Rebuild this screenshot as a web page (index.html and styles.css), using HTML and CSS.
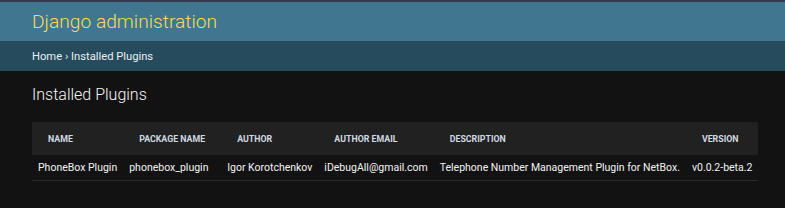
FILE: index.html
```html
<!DOCTYPE html>
<html>
<head>
<meta charset="utf-8">
<link rel="stylesheet" href="styles.css">
</head>
<body>
<div class="topline"></div>
<header class="header">
  <div class="brand">Django administration</div>
</header>
<nav class="breadcrumbs">Home &rsaquo; Installed Plugins</nav>
<main class="content">
  <h1 class="title">Installed Plugins</h1>
  <table class="plugins">
    <thead>
      <tr>
        <th>Name</th>
        <th>Package Name</th>
        <th>Author</th>
        <th>Author Email</th>
        <th>Description</th>
        <th>Version</th>
      </tr>
    </thead>
    <tbody>
      <tr>
        <td>PhoneBox Plugin</td>
        <td>phonebox_plugin</td>
        <td>Igor Korotchenkov</td>
        <td>iDebugAll@gmail.com</td>
        <td>Telephone Number Management Plugin for NetBox.</td>
        <td>v0.0.2-beta.2</td>
      </tr>
    </tbody>
  </table>
</main>
</body>
</html>
```
FILE: styles.css
```css
html, body {
  margin: 0;
  padding: 0;
  background: #121212;
  font-family: Roboto, "Liberation Sans", sans-serif;
  color: #eeeeee;
}
.topline {
  height: 2px;
  background: #363a4f;
}
.header {
  height: 39px;
  background: #417690;
  display: flex;
  align-items: center;
  padding: 0 32px;
}
.brand {
  color: #f5dd5d;
  font-size: 19.2px;
  font-weight: 300;
}
.breadcrumbs {
  height: 30px;
  background: #264b5d;
  display: flex;
  align-items: center;
  padding: 0 32px;
  color: #e8eef2;
  font-size: 11.2px;
}
.content {
  padding: 0 32px;
}
.title {
  margin: 14px 0 0;
  font-size: 16px;
  font-weight: 300;
  color: #f5f5f5;
  line-height: 20px;
}
.plugins {
  margin-top: 17px;
  border-collapse: collapse;
}
.plugins th {
  background: #212121;
  height: 33px;
  padding: 0 16px;
  text-align: left;
  font-size: 8.8px;
  font-weight: 700;
  text-transform: uppercase;
  color: #d0d8e0;
  white-space: nowrap;
}
.plugins td {
  height: 25px;
  padding: 0 6px;
  font-size: 10.5px;
  color: #f2f2f2;
  border-bottom: 1px solid #2a2a2a;
  white-space: nowrap;
}
```
